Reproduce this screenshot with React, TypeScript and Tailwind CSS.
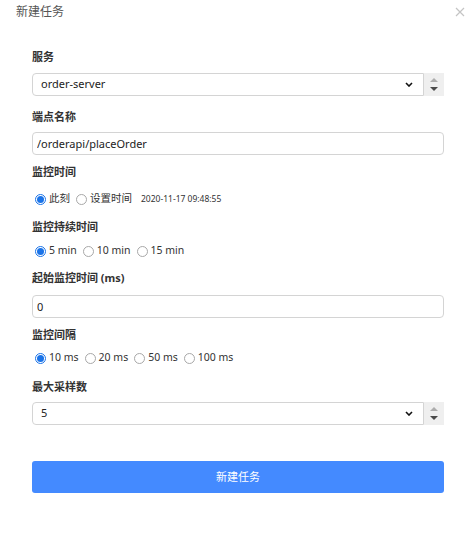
import React from "react";

const font = { fontFamily: '"Noto Sans", "Noto Sans CJK SC", sans-serif' };

function Label({ children, className = "" }: { children: React.ReactNode; className?: string }) {
  return <div className={`h-4 leading-4 text-[11px] font-bold text-[#333] ${className}`}>{children}</div>;
}

function Radio({ checked, label, first }: { checked?: boolean; label: string; first?: boolean }) {
  return (
    <label className={`flex items-center ${first ? "ml-[3px]" : "ml-[6px]"}`}>
      {checked ? (
        <span className="w-[11px] h-[11px] rounded-full border border-[#1a73e8] bg-white flex items-center justify-center">
          <span className="w-[7px] h-[7px] rounded-full bg-[#1a73e8]" />
        </span>
      ) : (
        <span className="w-[11px] h-[11px] rounded-full border border-[#a8a8a8] bg-white" />
      )}
      <span className="ml-[3px] text-[10.5px] text-[#333]">{label}</span>
    </label>
  );
}

function SelectBox({ value, className = "" }: { value: string; className?: string }) {
  return (
    <div className={`flex h-[23px] ${className}`}>
      <div className="flex flex-1 items-center border border-[#d4d4d4] rounded-l-sm bg-white">
        <select
          defaultValue={value}
          className="flex-1 appearance-none bg-transparent pl-2 text-[11px] text-[#222] outline-none"
        >
          <option>{value}</option>
        </select>
        <svg width="8" height="5" viewBox="0 0 8 5" className="mr-[10px]">
          <path d="M1 1 L4 4 L7 1" fill="none" stroke="#111" strokeWidth="1.6" />
        </svg>
      </div>
      <div className="w-5 bg-[#efefef] flex flex-col items-center justify-center gap-[5px]">
        <svg width="8" height="4" viewBox="0 0 8 4">
          <path d="M0 4 L4 0 L8 4 Z" fill="#adadad" />
        </svg>
        <svg width="8" height="4" viewBox="0 0 8 4">
          <path d="M0 0 L8 0 L4 4 Z" fill="#4a4a4a" />
        </svg>
      </div>
    </div>
  );
}

function TextInput({ value, className = "" }: { value: string; className?: string }) {
  return (
    <input
      defaultValue={value}
      className={`block w-full h-[23px] border border-[#d4d4d4] rounded-sm px-[4px] text-[11px] text-[#222] outline-none ${className}`}
    />
  );
}

export default function App() {
  return (
    <div className="w-[474px] h-[537px] bg-white" style={font}>
      <div className="flex items-center justify-between pt-1 pl-4 pr-[9px]">
        <span className="h-4 leading-4 text-[12px] text-[#555]">新建任务</span>
        <svg width="10" height="10" viewBox="0 0 10 10">
          <path d="M1 1 L9 9 M9 1 L1 9" stroke="#c4c4c4" strokeWidth="1.2" />
        </svg>
      </div>

      <form className="pl-8 pr-[30px] pt-[29px]">
        <Label>服务</Label>
        <SelectBox value="order-server" className="mt-2" />

        <Label className="mt-[13px]">端点名称</Label>
        <TextInput value="/orderapi/placeOrder" className="mt-[7px]" />

        <Label className="mt-[9px]">监控时间</Label>
        <div className="mt-[11px] h-4 flex items-center">
          <Radio checked label="此刻" first />
          <Radio label="设置时间" />
          <span className="ml-[9px] text-[8.5px] text-[#333]">2020-11-17 09:48:55</span>
        </div>

        <Label className="mt-3">监控持续时间</Label>
        <div className="mt-2 h-4 flex items-center">
          <Radio checked label="5 min" first />
          <Radio label="10 min" />
          <Radio label="15 min" />
        </div>

        <Label className="mt-[11px]">起始监控时间 (ms)</Label>
        <TextInput value="0" className="mt-[9px]" />

        <Label className="mt-[9px]">监控间隔</Label>
        <div className="mt-[7px] h-4 flex items-center">
          <Radio checked label="10 ms" first />
          <Radio label="20 ms" />
          <Radio label="50 ms" />
          <Radio label="100 ms" />
        </div>

        <Label className="mt-[13px]">最大采样数</Label>
        <SelectBox value="5" className="mt-[7px]" />

        <button
          type="button"
          className="mt-9 w-full h-8 rounded-[3px] bg-[#448aff] text-white text-[11px]"
        >
          新建任务
        </button>
      </form>
    </div>
  );
}
